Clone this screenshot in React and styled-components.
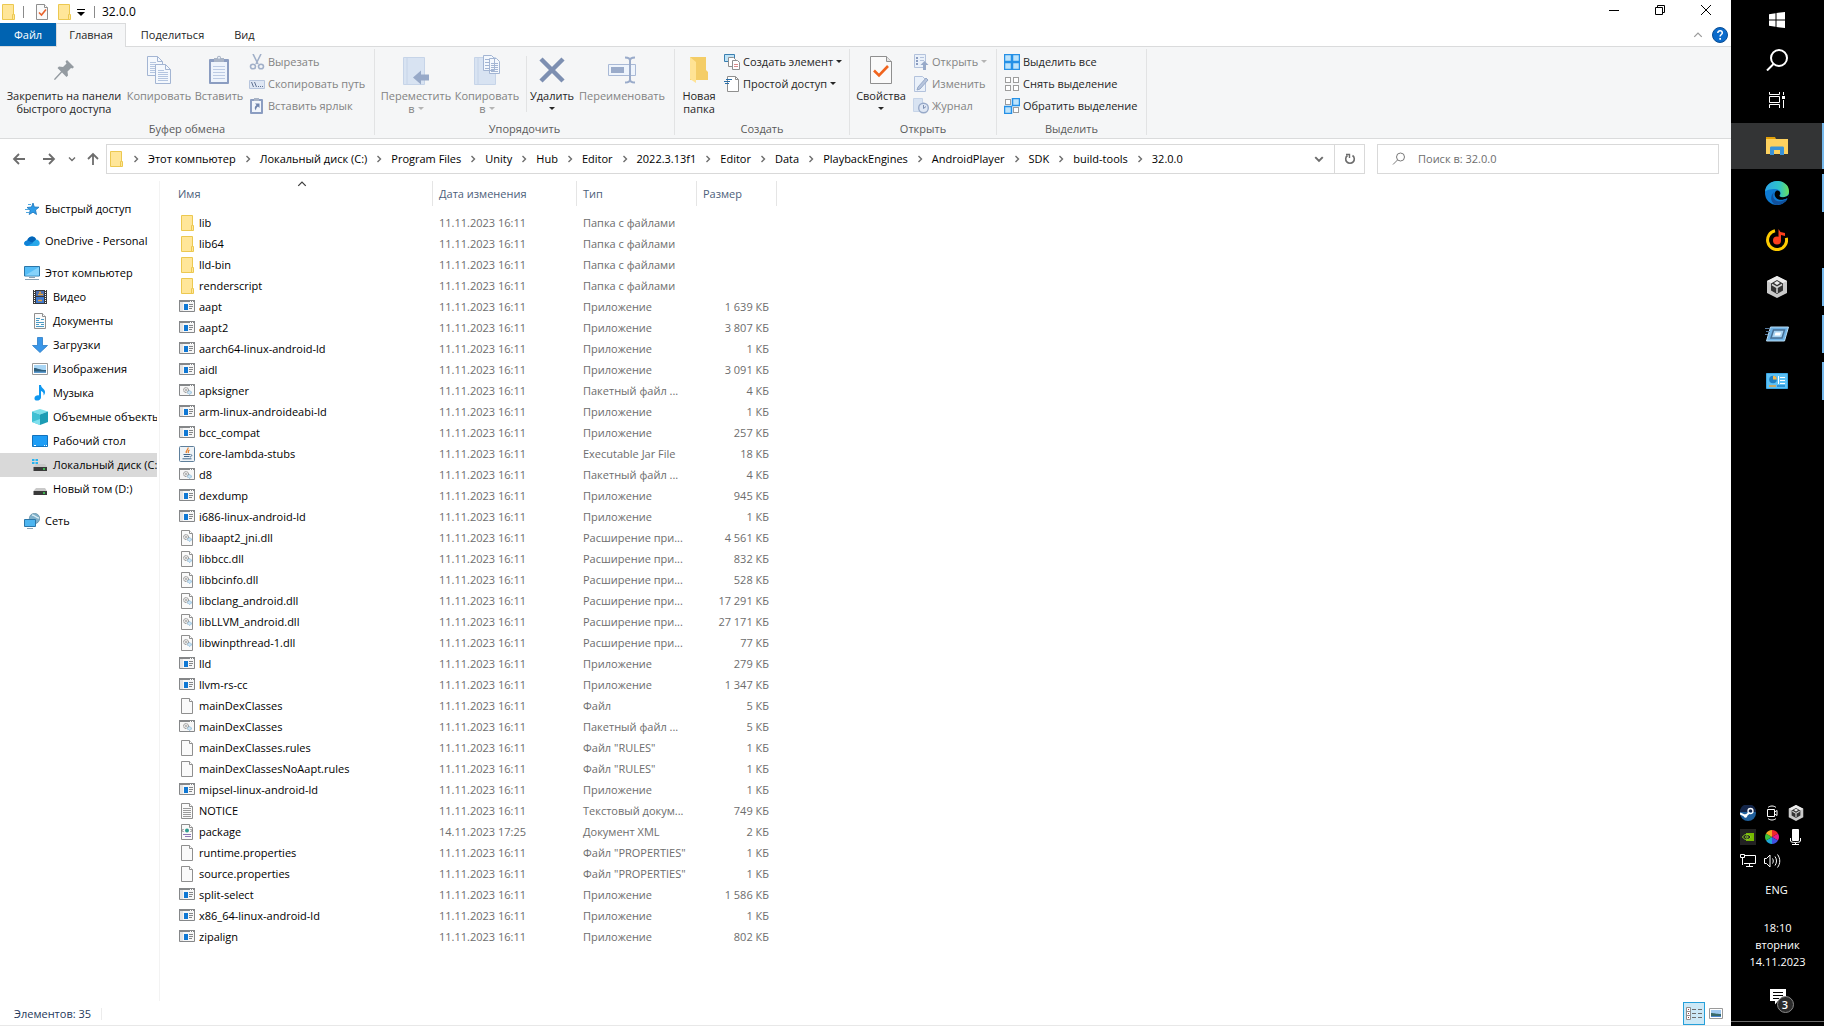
import React, { Fragment } from "react";
import styled, { createGlobalStyle } from "styled-components";

const GlobalStyle = createGlobalStyle`
    * {
        box-sizing: border-box;
    }

    body {
        margin: 0;
        background: #000000;
        font-family: "Open Sans", "Noto Sans", sans-serif;
        font-size: 11px;
        line-height: 16px;
        color: #000000;
    }

    button, input {
        font: inherit;
        color: inherit;
        border: 0;
        padding: 0;
        margin: 0;
        background: none;
    }

    svg {
        display: block;
        flex: none;
    }
`;

const Desktop = styled.div`
    display: flex;
    min-height: 100vh;
`;

const Window = styled.main`
    flex: 1;
    min-width: 0;
    display: flex;
    flex-direction: column;
    background: #ffffff;
    border-bottom: 1px solid #e8e8e8;
`;

/* Title bar */

const TitleBar = styled.header`
    display: flex;
    align-items: center;
    height: 23px;
    padding-right: 2px;
`;

const QuickButton = styled.button`
    display: flex;
    align-items: center;
    justify-content: center;
    width: ${({ $narrow }) => ($narrow ? "12px" : "22px")};
    height: 22px;
`;

const TitleDivider = styled.span`
    width: 1px;
    height: 12px;
    margin: 0 7px;
    background: #8a8a8a;
`;

const WindowTitle = styled.h1`
    flex: 1;
    margin: 0;
    font-size: 12px;
    font-weight: 400;
`;

const WindowButton = styled.button`
    display: flex;
    align-items: center;
    justify-content: center;
    width: 46px;
    height: 20px;
    margin-bottom: 3px;
`;

/* Tabs */

const TabBar = styled.nav`
    display: flex;
    height: 24px;
    border-bottom: 1px solid #dadbdc;
`;

const Tab = styled.button`
    height: 23px;
    padding: 0 15px;
    color: #262626;
`;

const FileTab = styled(Tab)`
    padding: 0 14px;
    background: #0063b1;
    color: #ffffff;
`;

const ActiveTab = styled(Tab)`
    height: 24px;
    padding: 0 12px 2px;
    border: solid #dadbdc;
    border-width: 1px 1px 0;
    background: #f5f6f7;
`;

const TabTools = styled.div`
    display: flex;
    align-items: center;
    gap: 9px;
    margin-left: auto;
    padding-right: 3px;
`;

const IconButton = styled.button`
    display: flex;
    align-items: center;
    justify-content: center;
`;

/* Ribbon */

const Ribbon = styled.section`
    display: flex;
    height: 92px;
    padding: 2px 0 3px;
    background: #f5f6f7;
    border-bottom: 1px solid #dadbdc;
`;

const Group = styled.div`
    display: flex;
    flex-direction: column;
    justify-content: space-between;
    width: ${({ $width }) => $width}px;
    border-right: 1px solid #e2e3e4;
`;

const GroupBody = styled.div`
    display: flex;
    padding-left: 3px;
`;

const GroupLabel = styled.div`
    height: 14px;
    text-align: center;
    color: #5a5a5a;
`;

const BigButton = styled.button`
    display: flex;
    flex-direction: column;
    align-items: center;
    width: ${({ $width }) => $width}px;
    padding-top: 5px;
    line-height: 13px;
    white-space: nowrap;
    color: ${({ $off }) => ($off ? "#838383" : "#262626")};
`;

const BigIcon = styled.span`
    display: flex;
    align-items: center;
    justify-content: center;
    width: 32px;
    height: 32px;
    margin-bottom: 3px;
`;

const InlineArrow = styled.span`
    display: inline-block;
    margin: 0 0 3px 3px;
    border: 3px solid transparent;
    border-top-color: ${({ $off }) => ($off ? "#b4b4b4" : "#262626")};
    border-bottom: 0;
    vertical-align: middle;
`;

const BelowArrow = styled(InlineArrow)`
    margin: 5px 0 0;
`;

const BodyDivider = styled.span`
    width: 1px;
    height: 56px;
    margin: 7px 3px 0 6px;
    background: #e2e3e4;
`;

const SmallColumn = styled.div`
    display: flex;
    flex-direction: column;
    margin-left: 4px;
    padding-top: 2px;
`;

const SmallButton = styled.button`
    display: flex;
    align-items: center;
    gap: 3px;
    height: 22px;
    white-space: nowrap;
    color: ${({ $off }) => ($off ? "#838383" : "#262626")};
`;

/* Address row */

const AddressRow = styled.div`
    display: flex;
    align-items: center;
    height: 42px;
    padding: 0 12px 2px 4px;
`;

const NavButton = styled(IconButton)`
    width: ${({ $width }) => $width}px;
    height: 28px;
`;

const AddressBox = styled.div`
    flex: 1;
    display: flex;
    align-items: center;
    height: 30px;
    min-width: 0;
    border: 1px solid #d9d9d9;
`;

const Crumbs = styled.div`
    flex: 1;
    display: flex;
    align-items: center;
    min-width: 0;
    padding-left: 1px;
    overflow: hidden;
`;

const Crumb = styled.button`
    white-space: nowrap;
`;

const CrumbArrow = styled.span`
    display: flex;
    justify-content: center;
    width: 24px;
`;

const AddressTool = styled.button`
    display: flex;
    align-items: center;
    justify-content: center;
    width: 30px;
    height: 28px;
    border-left: ${({ $line }) => ($line ? "1px solid #d9d9d9" : "0")};
`;

const SearchBox = styled.label`
    display: flex;
    align-items: center;
    gap: 12px;
    width: 342px;
    height: 30px;
    margin-left: 12px;
    padding-left: 14px;
    border: 1px solid #d9d9d9;
`;

const SearchInput = styled.input`
    flex: 1;
    min-width: 0;
    outline: 0;

    &::placeholder {
        color: #6d6d6d;
        opacity: 1;
    }
`;

/* Content */

const Content = styled.div`
    flex: 1;
    display: flex;
    padding-bottom: 1px;
`;

const Sidebar = styled.nav`
    width: 157px;
    margin-right: 2px;
    padding-top: 16px;
    overflow: hidden;
`;

const SideGroup = styled.div`
    margin-bottom: 8px;
`;

const SideLink = styled.a`
    display: flex;
    align-items: center;
    gap: 5px;
    height: 24px;
    padding-left: ${({ $child }) => ($child ? "32px" : "24px")};
    background: ${({ $selected }) => ($selected ? "#d9d9d9" : "transparent")};
    color: #000000;
    text-decoration: none;
    white-space: nowrap;
`;

const Files = styled.section`
    flex: 1;
    border-left: 1px solid #f3f3f3;
`;

const FileTable = styled.table`
    width: 617px;
    table-layout: fixed;
    border-collapse: collapse;
`;

const HeadCell = styled.th`
    position: relative;
    width: ${({ $width }) => $width}px;
    padding: 0 0 6px;
    font-weight: 400;
    text-align: left;
    color: #4c607a;
`;

const HeadButton = styled.button`
    display: block;
    width: 100%;
    height: 25px;
    padding-left: ${({ $first }) => ($first ? "18px" : "6px")};
    border-right: 1px solid #e5e5e5;
    text-align: left;
`;

const SortMark = styled.span`
    position: absolute;
    top: -2px;
    left: 50%;
`;

const Cell = styled.td`
    height: 21px;
    padding: 0 0 0 6px;
    color: #6d6d6d;
    white-space: nowrap;
`;

const SizeCell = styled(Cell)`
    padding-right: 8px;
    text-align: right;
`;

const NameCell = styled(Cell)`
    padding-left: 19px;
    color: #000000;
`;

const FileName = styled.span`
    display: flex;
    align-items: center;
    gap: 4px;
`;

/* Status bar */

const StatusBar = styled.footer`
    display: flex;
    align-items: center;
    height: 23px;
    padding: 0 4px 0 14px;
    color: #1e395b;
`;

const StatusText = styled.span`
    margin-right: auto;
    padding-right: 10px;
    border-right: 1px solid #ececec;
    line-height: 12px;
`;

const ViewButton = styled.button`
    display: flex;
    align-items: center;
    justify-content: center;
    width: 22px;
    height: 23px;
    border: 1px solid ${({ $active }) => ($active ? "#26a0da" : "transparent")};
    background: ${({ $active }) => ($active ? "#cce8f6" : "transparent")};
`;

/* Taskbar */

const Taskbar = styled.aside`
    display: flex;
    flex-direction: column;
    width: 93px;
    padding-bottom: 4px;
    background: #000000;
    color: #ffffff;
`;

const SystemButton = styled.button`
    display: flex;
    align-items: center;
    justify-content: center;
    height: 40px;
    padding-right: 2px;
`;

const AppList = styled.div`
    display: flex;
    flex-direction: column;
    gap: 1px;
    margin-top: 3px;
`;

const AppButton = styled.button`
    position: relative;
    display: flex;
    align-items: center;
    justify-content: center;
    height: 46px;
    padding-right: 2px;
    background: ${({ $active }) => ($active ? "#333435" : "transparent")};

    &::after {
        content: "";
        position: absolute;
        right: 0;
        top: ${({ $active }) => ($active ? "0" : "4px")};
        bottom: ${({ $active }) => ($active ? "0" : "4px")};
        width: 2px;
        background: ${({ $running }) => ($running ? "#76b9ed" : "transparent")};
    }
`;

const Tray = styled.div`
    display: grid;
    grid-template-columns: repeat(3, 24px);
    grid-auto-rows: 24px;
    margin: auto 0 0 5px;
`;

const TrayButton = styled.button`
    display: flex;
    align-items: center;
    justify-content: center;
`;

const Language = styled.button`
    height: 34px;
    padding-right: 2px;
`;

const Clock = styled.time`
    display: block;
    padding: 12px 0 19px;
    line-height: 17px;
    text-align: center;
`;

const Notifications = styled.button`
    position: relative;
    align-self: center;
    width: 16px;
    height: 16px;
    margin-bottom: 16px;
`;

const Badge = styled.span`
    position: absolute;
    left: 7px;
    top: 7px;
    width: 17px;
    height: 17px;
    border: 1px solid #8a8a8a;
    border-radius: 50%;
    background: #2b2b2b;
    font-weight: 600;
    line-height: 15px;
`;

const TaskbarLine = styled.hr`
    width: 100%;
    margin: 0;
    border: 0;
    border-top: 1px solid #6b6b6b;
`;

/* Icons */

const FolderIcon = () => (
    <svg width="16" height="16" viewBox="0 0 16 16">
        <path d="M2.500.5h11v10h1v5h-12z" fill="#ffe699" stroke="#ecc850" />
        <path d="M12.500 15.500v-5h1" fill="none" stroke="#ecc850" />
    </svg>
);

const PageShape = ({ children }) => (
    <svg width="16" height="16" viewBox="0 0 16 16">
        <path d="M2.500.5h8l3 3v12h-11z" fill="#fafafa" stroke="#8f8f8f" />
        <path d="M10.500.5v3h3" fill="#ffffff" stroke="#8f8f8f" />
        {children}
    </svg>
);

const Gears = () => (
    <>
        <circle cx="7" cy="7" r="2.500" fill="#e6e6e6" stroke="#808080" strokeDasharray="1.200 .6" />
        <circle cx="7" cy="7" r=".8" fill="#808080" />
        <circle cx="10.500" cy="9.500" r="1.800" fill="#cfe6f5" stroke="#7fb2d6" strokeDasharray="1.200 .6" />
    </>
);

const CheckPageIcon = () => (
    <PageShape>
        <path d="M5 8.500l2.500 2.500 4.500-5.500" fill="none" stroke="#e8622c" strokeWidth="1.600" />
    </PageShape>
);

const AppFrame = ({ children }) => (
    <svg width="16" height="16" viewBox="0 0 16 16">
        <path d="M.5 2.500h15v10h-15z" fill="#f7f7f7" stroke="#858789" />
        <path d="M0 1h16v2h-16z" fill="#858789" />
        <path d="M11 2.500h1M13 2.500h1" stroke="#ffffff" />
        {children}
    </svg>
);

const fileIcons = {
    folder: <FolderIcon />,
    exe: (
        <AppFrame>
            <path d="M1 3h3v9h-3z" fill="#e4e4e4" />
            <path d="M5 5h4v6h-4z" fill="#0f78d4" />
            <path d="M10 5.500h4M10 7.500h4M10 9.500h3" stroke="#858789" />
        </AppFrame>
    ),
    bat: (
        <AppFrame>
            <Gears />
        </AppFrame>
    ),
    dll: (
        <PageShape>
            <Gears />
        </PageShape>
    ),
    file: <PageShape />,
    text: (
        <PageShape>
            <path d="M4 5.500h8M4 7.500h8M4 9.500h8M4 11.500h8M4 13.500h8" stroke="#9a9a9a" />
        </PageShape>
    ),
    xml: (
        <PageShape>
            <path d="M4.500 5l-1.500 1.500 1.500 1.500M11.500 5l1.500 1.500-1.500 1.500" fill="none" stroke="#6d6d6d" />
            <circle cx="8" cy="6.500" r="2" fill="#2d9c8f" />
            <path d="M4 10.500h8M6 12.500h6" stroke="#8d78b5" />
        </PageShape>
    ),
    jar: (
        <svg width="16" height="16" viewBox="0 0 16 16">
            <rect x=".5" y=".5" width="15" height="15" rx="1" fill="#eef3f7" stroke="#5e7f9b" />
            <path d="M9 1.500c1 2-3 3-1.500 5.500M10.500 4c-2 1-1.500 2-1 3" fill="none" stroke="#e8812c" strokeWidth="1.200" />
            <path d="M4.500 8.500h6.500M5 10.500h5.500M3.500 12.800h9M11.500 8.500c2 0 1.500 2-.5 2.500" fill="none" stroke="#43688c" />
        </svg>
    ),
};

const PinIcon = () => (
    <svg width="22" height="22" viewBox="0 0 22 22">
        <path d="M14 1l7 7-1.500 1.500-1.500-.5-3.500 3.500.5 4-1.500 1.500-4.500-4.500L2 21l-1-.5.5-1L8 12.500 4.500 9l1.500-1.500 4 .5L13.500 4.500 12.500 2.500z" fill="#949ba1" />
    </svg>
);

const BigPage = ({ x, y }) => (
    <g transform={`translate(${x} ${y})`}>
        <path d="M.5.5h10l5 5v14h-15z" fill="#f4f8fd" stroke="#a3b5d3" />
        <path d="M10.500.5v5h5" fill="none" stroke="#a3b5d3" />
        <path d="M3 6.500h6M3 8.500h10M3 10.500h10M3 12.500h10M3 14.500h10M3 16.500h10" stroke="#b4c5e0" />
    </g>
);

const CopyIcon = () => (
    <svg width="28" height="30" viewBox="0 0 28 30">
        <BigPage x={2} y={1} />
        <BigPage x={10} y={9} />
    </svg>
);

const PasteIcon = () => (
    <svg width="22" height="30" viewBox="0 0 22 30">
        <rect x="1" y="4" width="20" height="25" rx="1" fill="#8b9dc1" />
        <path d="M3 7h16v20h-16z" fill="#eef4fc" />
        <path d="M5 11.500h12M5 14.500h12M5 17.500h12M5 20.500h12M5 23.500h12" stroke="#bccbe4" />
        <path d="M6 3h3c0-3 4-3 4 0h3v4h-10z" fill="#a9b4c6" />
        <circle cx="11" cy="2.800" r="1" fill="#eef4fc" />
    </svg>
);

const CutIcon = () => (
    <svg width="16" height="16" viewBox="0 0 16 16" fill="none" stroke="#a1b0c9" strokeWidth="1.600">
        <path d="M4 0l5 10M12 0L7 10" />
        <ellipse cx="4" cy="12.500" rx="2.500" ry="2.300" />
        <ellipse cx="12" cy="12.500" rx="2.500" ry="2.300" />
    </svg>
);

const PathIcon = () => (
    <svg width="16" height="16" viewBox="0 0 16 16">
        <path d="M.5 4.500h15v8h-15z" fill="#dfe7f4" stroke="#b7c5dd" />
        <path d="M2.500 6l2 5M5.500 6l2 5M9 10.500h1M11 10.500h1M13 10.500h1" stroke="#5f7192" />
    </svg>
);

const PasteLinkIcon = () => (
    <svg width="16" height="16" viewBox="0 0 16 16">
        <rect x="1" y="1" width="13" height="15" rx="1" fill="#8b9dc1" />
        <path d="M3 3h9v11h-9z" fill="#f2f6fc" />
        <path d="M5 0h5v3h-5z" fill="#a9b4c6" />
        <path d="M6 5.500h4.500v4.500l-1.500-1.500c-1.500 1-2 2-2 4-2-2-1.500-4 .5-5.500z" fill="#6f84ad" />
    </svg>
);

const PaleFolder = () => (
    <>
        <path d="M1.500 3.500h21v27h-21z" fill="#d8e3f2" stroke="#c6d4e8" />
        <path d="M5 4v26" stroke="#c6d4e8" />
    </>
);

const MoveToIcon = () => (
    <svg width="28" height="32" viewBox="0 0 28 32">
        <PaleFolder />
        <path d="M11 23.500l8-7v4h8v6h-8v4z" fill="#97a9c8" />
    </svg>
);

const CopyToIcon = () => (
    <svg width="28" height="32" viewBox="0 0 28 32">
        <PaleFolder />
        <path d="M10.500 1.500h8l3 3v12h-11zM16.500 4.500h7l3 3v12h-10z" fill="#f4f8fd" stroke="#a3b5d3" />
        <path d="M18 9.500h7M18 11.500h7M18 13.500h7M18 15.500h7M18 17.500h7M12 5.500h4M12 8.500h4M12 11.500h4M12 14.500h4" stroke="#a3b5d3" />
    </svg>
);

const DeleteIcon = () => (
    <svg width="26" height="26" viewBox="0 0 26 26">
        <path d="M2 2l22 22M24 2L2 24" stroke="#7d8fb1" strokeWidth="4.500" />
    </svg>
);

const RenameIcon = () => (
    <svg width="28" height="28" viewBox="0 0 28 28">
        <path d="M.5 8.500h27v11h-27z" fill="#eef4fc" stroke="#a9b9d6" />
        <path d="M3 11h13v6h-13z" fill="#9aabca" />
        <path d="M17 1.500c3 0 5 1 5 3v19c0 2-2 3-5 3M27 1.500c-3 0-5 1-5 3M22 23.500c0 2 2 3 5 3" fill="none" stroke="#9aabca" strokeWidth="2" />
    </svg>
);

const NewFolderIcon = () => (
    <svg width="20" height="28" viewBox="0 0 20 28">
        <path d="M1 1h16v13l2 2v8h-18z" fill="#f4cd67" />
        <path d="M1 1l6 5v21l-6-4z" fill="#ffe394" />
    </svg>
);

const NewItemIcon = () => (
    <svg width="16" height="16" viewBox="0 0 16 16">
        <path d="M.5.5h10v7h-10z" fill="#bfe3f7" stroke="#3a7fb0" />
        <path d="M4.500 3.500h5l2 2v7h-7z" fill="#ffffff" stroke="#8f8f8f" />
        <path d="M8.500 6.500h5l2 2v7h-7z" fill="#ffffff" stroke="#8f8f8f" />
        <path d="M10 10.500h4M10 12.500h4" stroke="#d98a8a" />
    </svg>
);

const EasyAccessIcon = () => (
    <svg width="16" height="16" viewBox="0 0 16 16">
        <path d="M3.500.5h8l3 3v12h-11z" fill="#ffffff" stroke="#8f8f8f" />
        <path d="M11.500.5v3h3" fill="none" stroke="#8f8f8f" />
        <path d="M2 3.500h6M0 5.500h6M1 7.500h4" stroke="#2a6fa8" />
    </svg>
);

const PropertiesIcon = () => (
    <svg width="24" height="30" viewBox="0 0 24 30">
        <path d="M1.500 1.500h16l5 5v22h-21z" fill="#fafafa" stroke="#8f8f8f" />
        <path d="M17.500 1.500v5h5" fill="#e4e4e4" stroke="#8f8f8f" />
        <path d="M5 15.500l5 5L19 11" fill="none" stroke="#f0641e" strokeWidth="2.600" />
    </svg>
);

const OpenIcon = () => (
    <svg width="16" height="16" viewBox="0 0 16 16">
        <path d="M1.500.5h11v13h-11z" fill="#eaf1fa" stroke="#b3c2dc" />
        <path d="M3 3h2v2h-2zM3 6h2v2h-2zM3 9h2v2h-2z" fill="#8b9dc1" />
        <path d="M7 3.500h4M7 6.500h4" stroke="#b3c2dc" />
        <path d="M11.500 7l4 4h-2.500v5h-3v-5h-2.500z" fill="#97a9c8" />
    </svg>
);

const EditIcon = () => (
    <svg width="16" height="16" viewBox="0 0 16 16">
        <path d="M1.500.5h8l3 3v12h-11z" fill="#eaf1fa" stroke="#b3c2dc" />
        <path d="M4 14l1-3L13 2l2 2-8 9z" fill="#b7c5dd" stroke="#97a9c8" />
    </svg>
);

const HistoryIcon = () => (
    <svg width="16" height="16" viewBox="0 0 16 16">
        <path d="M.5.5h9v13h-9z" fill="#d8e3f2" stroke="#c6d4e8" />
        <circle cx="10.500" cy="10" r="4.800" fill="#dfe7f4" stroke="#97a9c8" strokeWidth="1.400" />
        <path d="M10.500 7v3.500l2.500-2" fill="none" stroke="#7d8fb1" />
    </svg>
);

const squares = [[1, 1], [9, 1], [1, 9], [9, 9]];

const SelectIcon = ({ filled }) => (
    <svg width="16" height="16" viewBox="0 0 16 16">
        {squares.map(([x, y], index) => (
            filled.includes(index)
                ? <rect key={index} x={x - .5} y={y - .5} width="7" height="7" fill="#bde3fb" stroke="#2590e6" strokeWidth="1.500" />
                : <rect key={index} x={x + .5} y={y + .5} width="5" height="5" fill="#ffffff" stroke="#9d9d9d" />
        ))}
    </svg>
);

const Chevron = ({ dir, color = "#6d6d6d", size = 8, stroke = 1.400 }) => {
    const paths = {
        right: "M2.500 1L5.500 4L2.500 7",
        down: "M1 2.500L4 5.500L7 2.500",
        up: "M1 5.500L4 2.500L7 5.500",
    };
    return (
        <svg width={size} height={size} viewBox="0 0 8 8">
            <path d={paths[dir]} fill="none" stroke={color} strokeWidth={stroke} />
        </svg>
    );
};

const arrowPaths = {
    back: "M13 7H2M7 2L2 7l5 5",
    forward: "M1 7h11M7 2l5 5-5 5",
    up: "M7 13V2M2 7l5-5 5 5",
};

const Arrow = ({ dir }) => (
    <svg width="14" height="14" viewBox="0 0 14 14">
        <path d={arrowPaths[dir]} fill="none" stroke="#6d6d6d" strokeWidth="1.800" />
    </svg>
);

const StarIcon = () => (
    <svg width="16" height="16" viewBox="0 0 16 16">
        <path d="M9 2l1.300 4 4.700.2-3.500 2.800 1 4.500L9 11.200 5.200 13.500l1-4.500L3 6.500l4.500-.5z" fill="#2d9be8" stroke="#1b75bb" strokeWidth=".8" />
        <path d="M4 3.500h3M1 8.500h4M2 11.500h3" stroke="#4fa8e0" />
    </svg>
);

const CloudIcon = () => (
    <svg width="16" height="16" viewBox="0 0 16 16">
        <path d="M3 13C-1 12.500-.5 7.500 3.500 7.500 4.500 3 10.500 2 12 6.500c4.500 0 5 6.500 1 6.500z" fill="#28a8ea" />
        <path d="M3 7.500C4.500 3 10.500 2 12 6.500L8 10 3 7.500z" fill="#0364b8" />
        <path d="M3 13C-1 12.500-.5 7.500 3.500 7.500L9 10z" fill="#1081d6" />
    </svg>
);

const ComputerIcon = () => (
    <svg width="16" height="16" viewBox="0 0 16 16">
        <path d="M.5 1.500h15v9.500h-15z" fill="#55bdf7" stroke="#2b76a8" />
        <path d="M1 10.500L15 2v8.500z" fill="#86d3fb" />
        <path d="M5 12.500h6M1 14.500h14" stroke="#8aa2b3" />
    </svg>
);

const VideoIcon = () => (
    <svg width="16" height="16" viewBox="0 0 16 16">
        <path d="M1 1h14v14h-14z" fill="#3a3a3a" />
        <path d="M2.500 1v14M13.500 1v14" stroke="#ffffff" strokeDasharray="1 1" />
        <path d="M4 2h8v5h-8z" fill="#4d6fb0" />
        <path d="M4 8h8v6h-8z" fill="#3f7ad0" />
        <path d="M6 5.500h5M7 3.500h2M6 11.500h4" stroke="#e8a23a" strokeWidth="1.500" />
    </svg>
);

const DocumentsIcon = () => (
    <PageShape>
        <path d="M4 5.500h4M4 7.500h3M9 6.500h3M4 9.500h8M4 11.500h3M9 11.500h3M4 13.500h8" stroke="#4a9ac4" />
    </PageShape>
);

const DownloadIcon = () => (
    <svg width="16" height="16" viewBox="0 0 16 16">
        <path d="M5.500.5h5v8h5L8 15.500.5 8.500h5z" fill="#3a96e8" stroke="#2a7cc7" strokeWidth=".8" />
    </svg>
);

const PicturesIcon = () => (
    <svg width="16" height="16" viewBox="0 0 16 16">
        <path d="M.5 2.500h15v11h-15z" fill="#ffffff" stroke="#9a9a9a" />
        <path d="M2 4h12v8h-12z" fill="#a9d6f5" />
        <path d="M2 7c4 0 5 2 12 2v3h-12z" fill="#2f5f7d" />
        <path d="M2 10.500h12v1.500h-12z" fill="#5e9cd0" />
    </svg>
);

const MusicIcon = () => (
    <svg width="16" height="16" viewBox="0 0 16 16">
        <path d="M7 0h2c0 3 4 4 4 7 0 1.500-.5 2.500-1.500 3.500C12 8 11 6.500 9 6v6.500C9 16 2 17 2.500 13c.3-2 2.500-3 4.500-2.500z" fill="#0f98f0" />
    </svg>
);

const ObjectsIcon = () => (
    <svg width="16" height="16" viewBox="0 0 16 16">
        <path d="M8 0l8 2.500-8 3-8-3z" fill="#7be0ea" />
        <path d="M0 2.500l8 3v10.500l-8-3z" fill="#3fc0d3" />
        <path d="M16 2.500L8 5.500v10.500l8-3z" fill="#1c9cb4" />
        <path d="M0 13l8-3v6z" fill="#7fe0ee" />
    </svg>
);

const DesktopIcon = () => (
    <svg width="16" height="16" viewBox="0 0 16 16">
        <path d="M.5 2.500h15v11h-15z" fill="#1e9df5" stroke="#1272bd" />
        <path d="M2 12.500h2M12 12.500h1M14 12.500h1" stroke="#ffffff" />
    </svg>
);

const DriveIcon = ({ system }) => (
    <svg width="16" height="16" viewBox="0 0 16 16">
        <path d="M4 7h9l2 3h-13.500z" fill="#c9c9c9" />
        <path d="M1.500 10h13.500v4h-13.500z" fill="#3a3a3a" />
        <path d="M11 12h2" stroke="#42e05a" strokeWidth="1.400" />
        {system && <path d="M0 2h2.500v2h-2.500zM3.500 2h2.500v2h-2.500zM0 5h2.500v2h-2.500zM3.500 5h2.500v2h-2.500z" fill="#28b4f0" />}
    </svg>
);

const NetworkIcon = () => (
    <svg width="16" height="16" viewBox="0 0 16 16">
        <circle cx="10.500" cy="5.500" r="5.200" fill="#7fb0ca" stroke="#56839b" strokeWidth=".6" />
        <path d="M8 2c3 0 4 3 7 3" fill="none" stroke="#d8ecf5" strokeWidth="1.500" />
        <path d="M.5 6.500h11v7h-11z" fill="#4db5f0" stroke="#2b76a8" />
        <path d="M3 15.500h6" stroke="#8aa2b3" />
    </svg>
);

const SearchIcon = () => (
    <svg width="14" height="14" viewBox="0 0 14 14" fill="none" stroke="#7a7a7a">
        <circle cx="8.500" cy="5" r="4" />
        <path d="M5.500 8L1 12.500" />
    </svg>
);

const RefreshIcon = () => (
    <svg width="12" height="12" viewBox="0 0 12 12">
        <path d="M8.500 2.500a4.300 4.300 0 1 1-5 0" fill="none" stroke="#6d6d6d" strokeWidth="1.600" />
        <path d="M2 1.500h3.500V5" fill="none" stroke="#6d6d6d" strokeWidth="1.400" />
    </svg>
);

const HelpIcon = () => (
    <svg width="16" height="16" viewBox="0 0 16 16">
        <circle cx="8" cy="8" r="7.500" fill="#0b6bcb" stroke="#0a4d94" />
        <path d="M5.800 6c0-3 4.500-2.800 4.500 0 0 1.500-2.200 1.500-2.200 3.500" fill="none" stroke="#ffffff" strokeWidth="1.500" />
        <path d="M7.300 11h1.700v1.700h-1.700z" fill="#ffffff" />
    </svg>
);

const DetailsIcon = () => (
    <svg width="18" height="14" viewBox="0 0 18 14">
        <path d="M1.500.5h4v12h-4zM1.500 4.500h4M1.500 8.500h4" fill="#ffffff" stroke="#8f8f8f" />
        <path d="M3 2.500h1M3 6.500h1M3 10.500h1" stroke="#a33c3c" />
        <path d="M7 2.500h4M13 2.500h4M7 6.500h4M13 6.500h4M7 10.500h4M13 10.500h4" stroke="#6d6d6d" />
    </svg>
);

const LargeIconsIcon = () => (
    <svg width="14" height="11" viewBox="0 0 14 11">
        <path d="M.5.5h13v10h-13z" fill="#ffffff" stroke="#9a9a9a" />
        <path d="M2 2h10v7h-10z" fill="#9fc9f0" />
        <path d="M2 5c3 0 5 1 10 1v3h-10z" fill="#3a6a6a" />
        <path d="M2 8h10v1h-10z" fill="#4a86d0" />
    </svg>
);

const WindowsIcon = () => (
    <svg width="16" height="16" viewBox="0 0 16 16">
        <path d="M0 2.200l6.500-1v6.300h-6.500zM7.500 1l8.500-1v7.500h-8.500zM0 8.500h6.500v6.300l-6.500-1zM7.500 8.500h8.500v7.500l-8.500-1z" fill="#ffffff" />
    </svg>
);

const BigSearchIcon = () => (
    <svg width="22" height="22" viewBox="0 0 22 22" fill="none" stroke="#ffffff" strokeWidth="2">
        <circle cx="13" cy="9" r="8" />
        <path d="M7.500 15L1 21.500" />
    </svg>
);

const TaskViewIcon = () => (
    <svg width="16" height="16" viewBox="0 0 16 16" fill="none" stroke="#ffffff">
        <path d="M.5 4.500h10v6h-10zM.5 0v2.500h10V0M.5 16v-3.500h10V16M14.500 0v3M14.500 8v8" />
        <path d="M13 4h3v3h-3z" fill="#ffffff" stroke="none" />
    </svg>
);

const ExplorerIcon = () => (
    <svg width="22" height="20" viewBox="0 0 22 20">
        <path d="M0 1h9l1 2h-10z" fill="#e3a008" />
        <path d="M0 3h22v15h-22z" fill="#fdd15f" />
        <path d="M4 19v-7c0-1 .5-1.500 1.500-1.500h11c1 0 1.500.5 1.500 1.500v7h-4v-5h-6v5z" fill="#3a93d8" />
    </svg>
);

const EdgeIcon = () => (
    <svg width="24" height="24" viewBox="0 0 24 24">
        <defs>
            <linearGradient id="edgeTop" x1="0" x2="1">
                <stop offset="0" stopColor="#2ba5ea" />
                <stop offset=".6" stopColor="#2fc4c8" />
                <stop offset="1" stopColor="#6ae05c" />
            </linearGradient>
        </defs>
        <circle cx="12" cy="12" r="12" fill="#0d7ad3" />
        <path d="M0 11C1-4 24-3 24 10.500c0 4-3.500 6-7.500 5.500-2-.3-2.500-1-1.500-2 1.500-2 0-6-5-6C5 8 1 9 0 11z" fill="url(#edgeTop)" />
        <path d="M9 11c-3 6 2 13 13 7-2 4-6 6-10 6-6-1-8-8-3-13z" fill="#11509c" />
        <path d="M12 9.500c-3 1-3.500 6 .5 8.500 3 1.500 7 .5 9-.5 1-.5 1.500.5.5 1.500 1.500-2 2-4 2-5.500-2 2.500-5 3-8 2.500-1.500-.3-2-1.500-1-2.500 1-2-1-4.500-3-4z" fill="#000000" />
    </svg>
);

const MusicAppIcon = () => (
    <svg width="22" height="22" viewBox="0 0 22 22">
        <path d="M9 1.800a9.500 9.500 0 1 0 11.300 7" fill="none" stroke="#fecb00" strokeWidth="3" />
        <circle cx="11" cy="11.500" r="4" fill="#fc3f1d" />
        <path d="M12.500 0l2 3 4.500 1v3l-4-1v5.500h-2.500z" fill="#fc3f1d" />
    </svg>
);

const UnityIcon = ({ size }) => (
    <svg width={size} height={size} viewBox="0 0 22 22">
        <path d="M11 0l10 5v12l-10 5L1 17V5z" fill="#c9c9c9" />
        <path d="M11 0l10 5-10 5L1 5z" fill="#ececec" />
        <path d="M11 4l6 3.500v7L11 18l-6-3.500v-7z" fill="#333333" />
        <path d="M11 11.500V17M11 11.500L6 8.500M11 11.500l5-3" stroke="#d5d5d5" strokeWidth="1.500" />
        <path d="M11 5l3 2-3 2-3-2z" fill="#ececec" />
    </svg>
);

const RunIcon = () => (
    <svg width="24" height="16" viewBox="0 0 24 16">
        <path d="M5.500 1h18l-4 14h-18z" fill="#6fb3e6" stroke="#b8dcf5" />
        <path d="M8.500 4h11l-2.500 8h-11z" fill="#a5d2f2" stroke="#476f94" strokeWidth="1.500" />
        <path d="M10.500 6.500h5.500l-1 3h-5.500z" fill="#ffffff" />
        <path d="M0 2.500h5M1 5.500h4M0 8.500h3" stroke="#55789b" />
    </svg>
);

const PanelIcon = () => (
    <svg width="22" height="16" viewBox="0 0 22 16">
        <path d="M.5.5h21v15h-21z" fill="#5cc1f5" stroke="#3ba7e4" />
        <circle cx="7" cy="6.500" r="3.800" fill="#1f80c4" />
        <path d="M7 2.700v3.800h3.800A3.800 3.800 0 0 0 7 2.700z" fill="#f7b84b" />
        <path d="M14 4.500h5M14 7.500h5M14 10.500h5M12.500 3v8" stroke="#ffffff" />
        <path d="M3 13h7" stroke="#f0a030" strokeWidth="1.400" />
        <path d="M11 13h8" stroke="#1f80c4" strokeWidth="1.400" />
    </svg>
);

const SteamIcon = () => (
    <svg width="16" height="16" viewBox="0 0 16 16">
        <circle cx="8" cy="8" r="8" fill="#1f5f9c" />
        <path d="M0 7a8 8 0 0 1 16 0z" fill="#14264a" />
        <circle cx="10.500" cy="6" r="2.500" fill="none" stroke="#ffffff" strokeWidth="1.300" />
        <path d="M0 8.500l5.500 2.500 4-3.500" fill="none" stroke="#ffffff" strokeWidth="2" />
        <circle cx="5.500" cy="11" r="1.800" fill="#ffffff" />
    </svg>
);

const MeetIcon = () => (
    <svg width="16" height="16" viewBox="0 0 16 16" fill="none" stroke="#ffffff">
        <path d="M3.500 4.500h7v7h-7zM10.500 7l2.500-1.500v5L10.500 9M4 2.500c2-2 6-2 8 0M4 13.500c2 2 6 2 8 0" />
    </svg>
);

const NvidiaIcon = () => (
    <svg width="16" height="16" viewBox="0 0 16 16">
        <path d="M0 0h16v16h-16z" fill="#222222" />
        <path d="M6 4h8v8h-8z" fill="#76b900" />
        <path d="M2.500 8c2-3.500 6.500-3.500 8.500 0-2 3.500-6.500 3.500-8.500 0z" fill="#222222" stroke="#8fd024" />
        <circle cx="6.800" cy="8" r="1.200" fill="none" stroke="#8fd024" />
    </svg>
);

const colorWheel = [
    ["#f0282d", "M8 8L8 1A7 7 0 0 1 14 4.500z"],
    ["#e91e8c", "M8 8L14 4.500A7 7 0 0 1 14 11.500z"],
    ["#3f51e0", "M8 8L14 11.500A7 7 0 0 1 8 15z"],
    ["#1fa8d8", "M8 8L8 15A7 7 0 0 1 2 11.500z"],
    ["#3cc13b", "M8 8L2 11.500A7 7 0 0 1 2 4.500z"],
    ["#f5a623", "M8 8L2 4.500A7 7 0 0 1 8 1z"],
];

const ColorIcon = () => (
    <svg width="16" height="16" viewBox="0 0 16 16">
        {colorWheel.map(([color, d]) => <path key={color} d={d} fill={color} />)}
    </svg>
);

const MicIcon = () => (
    <svg width="16" height="18" viewBox="0 0 16 18">
        <rect x="4" y="1" width="7" height="12" rx="1" fill="#ffffff" />
        <path d="M2.500 10v3c0 2 10 2 10 0v-3M7.500 14.500v2M4 16.500h7" fill="none" stroke="#ffffff" />
    </svg>
);

const WiredIcon = () => (
    <svg width="16" height="16" viewBox="0 0 16 16" fill="none" stroke="#ffffff">
        <path d="M5 2.500h10.500v8H4M9.500 10.500v3M6 13.500h7M.5 1.500h4v3h-4zM2.500 4.500v7.500" />
    </svg>
);

const SoundIcon = () => (
    <svg width="18" height="16" viewBox="0 0 18 16" fill="none" stroke="#ffffff">
        <path d="M1.500 5.500h2l3.500-3.500v12l-3.500-3.500h-2zM9.500 5.500c1 1.500 1 3.500 0 5M12 3.500c2 3 2 6 0 9M14.500 1.500c3 4 3 9 0 13" />
    </svg>
);

const MessageIcon = () => (
    <svg width="16" height="16" viewBox="0 0 16 16">
        <path d="M0 0h16v12h-8l-3 3.500v-3.500h-5z" fill="#ffffff" />
        <path d="M3 3.500h10M3 6.500h10M3 9.500h6" stroke="#000000" />
    </svg>
);

/* Data */

const crumbs = [
    "Этот компьютер", "Локальный диск (C:)", "Program Files", "Unity", "Hub", "Editor", "2022.3.13f1",
    "Editor", "Data", "PlaybackEngines", "AndroidPlayer", "SDK", "build-tools", "32.0.0",
];

const sideGroups = [
    [{ label: "Быстрый доступ", icon: <StarIcon /> }],
    [{ label: "OneDrive - Personal", icon: <CloudIcon /> }],
    [
        { label: "Этот компьютер", icon: <ComputerIcon /> },
        { label: "Видео", icon: <VideoIcon />, child: true },
        { label: "Документы", icon: <DocumentsIcon />, child: true },
        { label: "Загрузки", icon: <DownloadIcon />, child: true },
        { label: "Изображения", icon: <PicturesIcon />, child: true },
        { label: "Музыка", icon: <MusicIcon />, child: true },
        { label: "Объемные объекты", icon: <ObjectsIcon />, child: true },
        { label: "Рабочий стол", icon: <DesktopIcon />, child: true },
        { label: "Локальный диск (C:)", icon: <DriveIcon system />, child: true, selected: true },
        { label: "Новый том (D:)", icon: <DriveIcon />, child: true },
    ],
    [{ label: "Сеть", icon: <NetworkIcon /> }],
];

const types = {
    folder: "Папка с файлами",
    exe: "Приложение",
    bat: "Пакетный файл ...",
    dll: "Расширение при...",
    jar: "Executable Jar File",
    file: "Файл",
    text: "Текстовый докум...",
    xml: "Документ XML",
};

const files = [
    { name: "lib", kind: "folder" },
    { name: "lib64", kind: "folder" },
    { name: "lld-bin", kind: "folder" },
    { name: "renderscript", kind: "folder" },
    { name: "aapt", kind: "exe", size: "1 639" },
    { name: "aapt2", kind: "exe", size: "3 807" },
    { name: "aarch64-linux-android-ld", kind: "exe", size: "1" },
    { name: "aidl", kind: "exe", size: "3 091" },
    { name: "apksigner", kind: "bat", size: "4" },
    { name: "arm-linux-androideabi-ld", kind: "exe", size: "1" },
    { name: "bcc_compat", kind: "exe", size: "257" },
    { name: "core-lambda-stubs", kind: "jar", size: "18" },
    { name: "d8", kind: "bat", size: "4" },
    { name: "dexdump", kind: "exe", size: "945" },
    { name: "i686-linux-android-ld", kind: "exe", size: "1" },
    { name: "libaapt2_jni.dll", kind: "dll", size: "4 561" },
    { name: "libbcc.dll", kind: "dll", size: "832" },
    { name: "libbcinfo.dll", kind: "dll", size: "528" },
    { name: "libclang_android.dll", kind: "dll", size: "17 291" },
    { name: "libLLVM_android.dll", kind: "dll", size: "27 171" },
    { name: "libwinpthread-1.dll", kind: "dll", size: "77" },
    { name: "lld", kind: "exe", size: "279" },
    { name: "llvm-rs-cc", kind: "exe", size: "1 347" },
    { name: "mainDexClasses", kind: "file", size: "5" },
    { name: "mainDexClasses", kind: "bat", size: "5" },
    { name: "mainDexClasses.rules", kind: "file", type: "Файл \"RULES\"", size: "1" },
    { name: "mainDexClassesNoAapt.rules", kind: "file", type: "Файл \"RULES\"", size: "1" },
    { name: "mipsel-linux-android-ld", kind: "exe", size: "1" },
    { name: "NOTICE", kind: "text", size: "749" },
    { name: "package", kind: "xml", date: "14.11.2023 17:25", size: "2" },
    { name: "runtime.properties", kind: "file", type: "Файл \"PROPERTIES\"", size: "1" },
    { name: "source.properties", kind: "file", type: "Файл \"PROPERTIES\"", size: "1" },
    { name: "split-select", kind: "exe", size: "1 586" },
    { name: "x86_64-linux-android-ld", kind: "exe", size: "1" },
    { name: "zipalign", kind: "exe", size: "802" },
];

const apps = [
    { name: "Проводник", icon: <ExplorerIcon />, active: true, running: true },
    { name: "Microsoft Edge", icon: <EdgeIcon />, running: true },
    { name: "Яндекс Музыка", icon: <MusicAppIcon /> },
    { name: "Unity Hub", icon: <UnityIcon size={22} />, running: true },
    { name: "Выполнить", icon: <RunIcon />, running: true },
    { name: "Панель управления", icon: <PanelIcon />, running: true },
];

const trayItems = [
    { name: "Steam", icon: <SteamIcon /> },
    { name: "Провести собрание", icon: <MeetIcon /> },
    { name: "Unity", icon: <UnityIcon size={16} /> },
    { name: "NVIDIA", icon: <NvidiaIcon /> },
    { name: "Подсветка", icon: <ColorIcon /> },
    { name: "Микрофон", icon: <MicIcon /> },
    { name: "Сеть", icon: <WiredIcon /> },
    { name: "Громкость", icon: <SoundIcon /> },
];

const Big = ({ width, off, icon, children }) => (
    <BigButton $width={width} $off={off}>
        <BigIcon>{icon}</BigIcon>
        {children}
    </BigButton>
);

const Small = ({ off, icon, arrow, children }) => (
    <SmallButton $off={off}>
        {icon}
        <span>
            {children}
            {arrow && <InlineArrow $off={off} />}
        </span>
    </SmallButton>
);

const RibbonBar = () => (
    <Ribbon>
        <Group $width={375}>
            <GroupBody>
                <Big width={122} icon={<PinIcon />}>
                    <span>Закрепить на панели</span>
                    <span>быстрого доступа</span>
                </Big>
                <Big width={68} off icon={<CopyIcon />}>Копировать</Big>
                <Big width={52} off icon={<PasteIcon />}>Вставить</Big>
                <SmallColumn>
                    <Small off icon={<CutIcon />}>Вырезать</Small>
                    <Small off icon={<PathIcon />}>Скопировать путь</Small>
                    <Small off icon={<PasteLinkIcon />}>Вставить ярлык</Small>
                </SmallColumn>
            </GroupBody>
            <GroupLabel>Буфер обмена</GroupLabel>
        </Group>
        <Group $width={300}>
            <GroupBody>
                <Big width={76} off icon={<MoveToIcon />}>
                    <span>Переместить</span>
                    <span>в<InlineArrow $off /></span>
                </Big>
                <Big width={66} off icon={<CopyToIcon />}>
                    <span>Копировать</span>
                    <span>в<InlineArrow $off /></span>
                </Big>
                <BodyDivider />
                <Big width={44} icon={<DeleteIcon />}>
                    <span>Удалить</span>
                    <BelowArrow />
                </Big>
                <Big width={96} off icon={<RenameIcon />}>Переименовать</Big>
            </GroupBody>
            <GroupLabel>Упорядочить</GroupLabel>
        </Group>
        <Group $width={175}>
            <GroupBody>
                <Big width={42} icon={<NewFolderIcon />}>
                    <span>Новая</span>
                    <span>папка</span>
                </Big>
                <SmallColumn>
                    <Small icon={<NewItemIcon />} arrow>Создать элемент</Small>
                    <Small icon={<EasyAccessIcon />} arrow>Простой доступ</Small>
                </SmallColumn>
            </GroupBody>
            <GroupLabel>Создать</GroupLabel>
        </Group>
        <Group $width={147}>
            <GroupBody>
                <Big width={56} icon={<PropertiesIcon />}>
                    <span>Свойства</span>
                    <BelowArrow />
                </Big>
                <SmallColumn>
                    <Small off icon={<OpenIcon />} arrow>Открыть</Small>
                    <Small off icon={<EditIcon />}>Изменить</Small>
                    <Small off icon={<HistoryIcon />}>Журнал</Small>
                </SmallColumn>
            </GroupBody>
            <GroupLabel>Открыть</GroupLabel>
        </Group>
        <Group $width={150}>
            <GroupBody>
                <SmallColumn>
                    <Small icon={<SelectIcon filled={[0, 1, 2, 3]} />}>Выделить все</Small>
                    <Small icon={<SelectIcon filled={[]} />}>Снять выделение</Small>
                    <Small icon={<SelectIcon filled={[1, 2]} />}>Обратить выделение</Small>
                </SmallColumn>
            </GroupBody>
            <GroupLabel>Выделить</GroupLabel>
        </Group>
    </Ribbon>
);

const FileList = () => (
    <FileTable>
        <thead>
            <tr>
                <HeadCell $width={273}>
                    <HeadButton $first>Имя</HeadButton>
                    <SortMark><Chevron dir="up" color="#3c3c3c" size={10} stroke={1} /></SortMark>
                </HeadCell>
                <HeadCell $width={144}><HeadButton>Дата изменения</HeadButton></HeadCell>
                <HeadCell $width={120}><HeadButton>Тип</HeadButton></HeadCell>
                <HeadCell $width={80}><HeadButton>Размер</HeadButton></HeadCell>
            </tr>
        </thead>
        <tbody>
            {files.map((file, index) => (
                <tr key={index}>
                    <NameCell>
                        <FileName>
                            {fileIcons[file.kind]}
                            {file.name}
                        </FileName>
                    </NameCell>
                    <Cell>{file.date || "11.11.2023 16:11"}</Cell>
                    <Cell>{file.type || types[file.kind]}</Cell>
                    <SizeCell>{file.size && `${file.size} КБ`}</SizeCell>
                </tr>
            ))}
        </tbody>
    </FileTable>
);

const App = () => {

    return (
        <>
            <GlobalStyle />
            <Desktop>
                <Window>
                    <TitleBar>
                        <FolderIcon />
                        <TitleDivider />
                        <QuickButton aria-label="Свойства"><CheckPageIcon /></QuickButton>
                        <QuickButton aria-label="Новая папка"><FolderIcon /></QuickButton>
                        <QuickButton $narrow aria-label="Настройка панели">
                            <svg width="8" height="8" viewBox="0 0 8 8">
                                <path d="M0 1.500h8" stroke="#000000" />
                                <path d="M0 4h8l-4 4z" fill="#000000" />
                            </svg>
                        </QuickButton>
                        <TitleDivider />
                        <WindowTitle>32.0.0</WindowTitle>
                        <WindowButton aria-label="Свернуть">
                            <svg width="10" height="10"><path d="M0 5.500h10" stroke="#000000" /></svg>
                        </WindowButton>
                        <WindowButton aria-label="Восстановить">
                            <svg width="10" height="10" fill="none" stroke="#000000">
                                <path d="M.5 2.500h7v7h-7zM2.500 2.500v-2h7v7h-2" />
                            </svg>
                        </WindowButton>
                        <WindowButton aria-label="Закрыть">
                            <svg width="10" height="10"><path d="M0 0l10 10M10 0L0 10" stroke="#000000" /></svg>
                        </WindowButton>
                    </TitleBar>
                    <TabBar>
                        <FileTab>Файл</FileTab>
                        <ActiveTab>Главная</ActiveTab>
                        <Tab>Поделиться</Tab>
                        <Tab>Вид</Tab>
                        <TabTools>
                            <IconButton aria-label="Свернуть ленту"><Chevron dir="up" color="#9a9a9a" size={10} stroke={1} /></IconButton>
                            <IconButton aria-label="Справка"><HelpIcon /></IconButton>
                        </TabTools>
                    </TabBar>
                    <RibbonBar />
                    <AddressRow>
                        <NavButton $width={30} aria-label="Назад"><Arrow dir="back" /></NavButton>
                        <NavButton $width={30} aria-label="Вперед"><Arrow dir="forward" /></NavButton>
                        <NavButton $width={16} aria-label="Последние расположения"><Chevron dir="down" /></NavButton>
                        <NavButton $width={26} aria-label="Вверх"><Arrow dir="up" /></NavButton>
                        <AddressBox>
                            <Crumbs>
                                <FolderIcon />
                                {crumbs.map((crumb, index) => (
                                    <Fragment key={index}>
                                        <CrumbArrow><Chevron dir="right" /></CrumbArrow>
                                        <Crumb>{crumb}</Crumb>
                                    </Fragment>
                                ))}
                            </Crumbs>
                            <AddressTool aria-label="Предыдущие расположения"><Chevron dir="down" size={10} stroke={1.600} /></AddressTool>
                            <AddressTool $line aria-label="Обновить"><RefreshIcon /></AddressTool>
                        </AddressBox>
                        <SearchBox>
                            <SearchIcon />
                            <SearchInput type="text" aria-label="Поиск" placeholder="Поиск в: 32.0.0" />
                        </SearchBox>
                    </AddressRow>
                    <Content>
                        <Sidebar>
                            {sideGroups.map((group, index) => (
                                <SideGroup key={index}>
                                    {group.map((item) => (
                                        <SideLink key={item.label} href="#" $child={item.child} $selected={item.selected}>
                                            {item.icon}
                                            {item.label}
                                        </SideLink>
                                    ))}
                                </SideGroup>
                            ))}
                        </Sidebar>
                        <Files>
                            <FileList />
                        </Files>
                    </Content>
                    <StatusBar>
                        <StatusText>Элементов: 35</StatusText>
                        <ViewButton $active aria-label="Таблица"><DetailsIcon /></ViewButton>
                        <ViewButton aria-label="Крупные значки"><LargeIconsIcon /></ViewButton>
                    </StatusBar>
                </Window>
                <Taskbar>
                    <SystemButton aria-label="Пуск"><WindowsIcon /></SystemButton>
                    <SystemButton aria-label="Поиск"><BigSearchIcon /></SystemButton>
                    <SystemButton aria-label="Представление задач"><TaskViewIcon /></SystemButton>
                    <AppList>
                        {apps.map((app) => (
                            <AppButton key={app.name} aria-label={app.name} $active={app.active} $running={app.running}>
                                {app.icon}
                            </AppButton>
                        ))}
                    </AppList>
                    <Tray>
                        {trayItems.map((item) => (
                            <TrayButton key={item.name} aria-label={item.name}>{item.icon}</TrayButton>
                        ))}
                    </Tray>
                    <Language>ENG</Language>
                    <Clock>
                        18:10<br />вторник<br />14.11.2023
                    </Clock>
                    <Notifications aria-label="Уведомления">
                        <MessageIcon />
                        <Badge>3</Badge>
                    </Notifications>
                    <TaskbarLine />
                </Taskbar>
            </Desktop>
        </>
    );
};

export default App;
